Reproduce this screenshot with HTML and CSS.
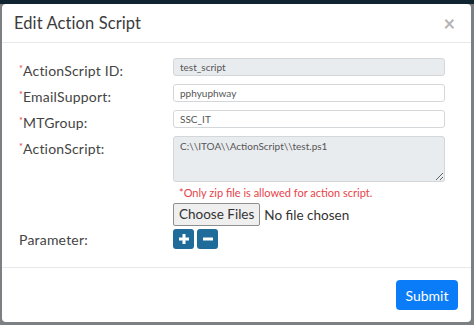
FILE: index.html
```html
<!DOCTYPE html>
<html lang="en">
<head>
    <meta charset="UTF-8">
    <title>Edit Action Script</title>
    <link rel="stylesheet" href="styles.css">
</head>
<body>
    <div class="topbar"></div>
    <div class="modal">
        <header class="modal-head">
            <h1>Edit Action Script</h1>
            <span class="close">&times;</span>
        </header>
        <form class="modal-body">
            <div class="row">
                <label><span class="req">*</span>ActionScript ID:</label>
                <input type="text" value="test_script" readonly class="ro">
            </div>
            <div class="row">
                <label><span class="req">*</span>EmailSupport:</label>
                <input type="text" value="pphyuphway">
            </div>
            <div class="row">
                <label><span class="req">*</span>MTGroup:</label>
                <input type="text" value="SSC_IT" class="small">
            </div>
            <div class="row area">
                <label><span class="req">*</span>ActionScript:</label>
                <textarea readonly>C:\\ITOA\\ActionScript\\test.ps1</textarea>
            </div>
            <div class="row note-row">
                <label></label>
                <p class="note">*Only zip file is allowed for action script.</p>
            </div>
            <div class="row file-row">
                <label></label>
                <div class="file">
                    <span class="file-btn">Choose Files</span>
                    <span class="file-name">No file chosen</span>
                </div>
            </div>
            <div class="row param">
                <label>Parameter:</label>
                <div class="pm">
                    <button type="button" class="pm-btn">
                        <svg width="12" height="12" viewBox="0 0 12 12"><path d="M4.5 1h3v3.5H11v3H7.5V11h-3V7.5H1v-3h3.5z" fill="#fff"/></svg>
                    </button>
                    <button type="button" class="pm-btn">
                        <svg width="12" height="12" viewBox="0 0 12 12"><rect x="1" y="4.5" width="10" height="3" fill="#fff"/></svg>
                    </button>
                </div>
            </div>
        </form>
        <footer class="modal-foot">
            <button type="button" class="submit">Submit</button>
        </footer>
    </div>
</body>
</html>
```

FILE: styles.css
```css
*{
    margin: 0;
    box-sizing: border-box;
}
body{
    background: #7d8083;
    font-family: "Lato", "DejaVu Sans", sans-serif;
    height: 325px;
    overflow: hidden;
}
.topbar{
    height: 4px;
    background: #0f2430;
}
.modal{
    background: #fff;
    margin: 0 3px 0 2px;
    height: 318px;
    border-radius: 4px;
    display: flex;
    flex-direction: column;
}
.modal-head{
    display: flex;
    align-items: center;
    justify-content: space-between;
    height: 39px;
    padding: 0 16px 0 12px;
    border-bottom: 1px solid #e6e8ea;
}
.modal-head h1{
    font-size: 16.5px;
    font-weight: 400;
    color: #3c3c3c;
    letter-spacing: 0.1px;
}
.close{
    font-size: 20px;
    color: #b4b4b4;
    font-weight: 700;
}
.modal-body{
    padding: 15px 0 0 17px;
    height: 225px;
    border-bottom: 1px solid #e6e8ea;
}
.row{
    display: flex;
    align-items: flex-start;
    height: 18px;
    margin-bottom: 8px;
}
label{
    flex: none;
    width: 154px;
    font-size: 14px;
    line-height: 18px;
    color: #444;
    padding-top: 2px;
    letter-spacing: 0.2px;
}
.req{
    color: #e53340;
    font-size: 9px;
    vertical-align: 4px;
}
input, textarea{
    width: 272px;
    height: 18px;
    border: 1px solid #d4d7da;
    border-radius: 3px;
    padding: 0 6px;
    font-family: "Lato", sans-serif;
    font-size: 10px;
    color: #555;
    background: #fff;
}
input.ro, textarea{
    background: #e9ecef;
}
.row.area{
    height: 46px;
    margin-bottom: 4px;
}
textarea{
    height: 46px;
    padding: 3px 6px;
    resize: vertical;
}
.note-row{
    height: 13px;
    margin-bottom: 4px;
}
.note{
    color: #e8434a;
    font-size: 11px;
    line-height: 13px;
    padding-left: 6px;
}
.file-row{
    height: 23px;
    margin-bottom: 3px;
}
.file{
    display: flex;
    align-items: center;
    gap: 4px;
    font-size: 13.5px;
    color: #333;
}
.file-btn{
    background: #efefef;
    border: 1px solid #8f8f8f;
    border-radius: 2px;
    padding: 2px 5px;
    height: 23px;
}
.param{
    height: 20px;
}
.param label{
    padding-top: 2px;
}
.pm{
    display: flex;
    gap: 3px;
}
.pm-btn{
    width: 21px;
    height: 20px;
    border: none;
    border-radius: 3px;
    background: #1f6c9b;
    display: flex;
    align-items: center;
    justify-content: center;
    padding: 0;
}
.modal-foot{
    display: flex;
    justify-content: flex-end;
    padding: 12px 13px 0 0;
}
.submit{
    background: #0b7cf7;
    color: #fff;
    border: none;
    border-radius: 4px;
    width: 62px;
    height: 30px;
    font-size: 14px;
    font-family: "Lato", sans-serif;
}
```
